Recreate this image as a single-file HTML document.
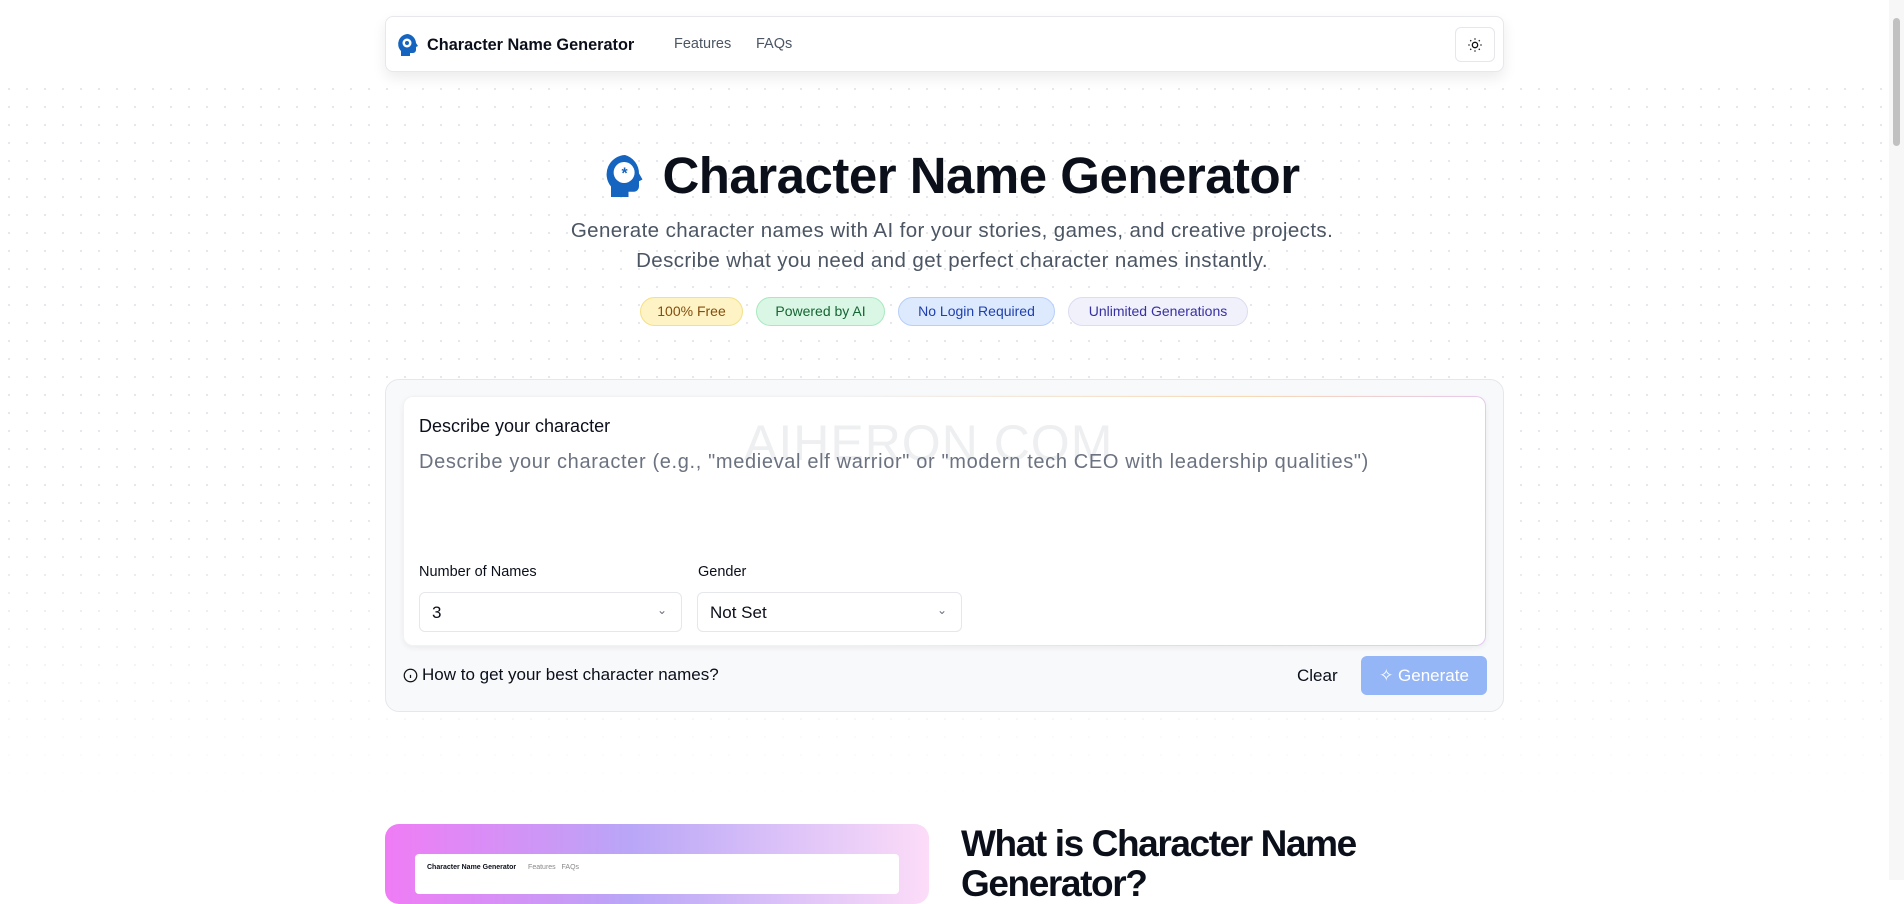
<!DOCTYPE html>
<html><head><meta charset="utf-8"><style>
*{box-sizing:border-box;margin:0;padding:0}
html,body{width:1904px;height:880px;overflow:hidden;background:#fff;font-family:"Liberation Sans",sans-serif;color:#0b0f1a}
.dots{position:absolute;left:0;top:80px;width:1889px;height:720px;background-image:radial-gradient(#e3e5ea 1px,transparent 1.2px);background-size:18px 18px;-webkit-mask-image:linear-gradient(#000 60%,transparent);}
.nav{position:absolute;left:385px;top:16px;width:1119px;height:56px;background:#fff;border:1px solid #e6e8ec;border-radius:8px;box-shadow:0 6px 14px rgba(0,0,0,.08)}
.brand{position:absolute;left:10px;top:15px;display:flex;align-items:center;gap:7px;font-weight:700;font-size:16.3px}
.nl{position:absolute;top:19px;font-size:14.5px;color:#4b5563}
.tb{position:absolute;right:8px;top:10px;width:40px;height:35px;border:1px solid #e5e7eb;border-radius:6px;display:flex;align-items:center;justify-content:center}
h1{position:absolute;left:0;width:1904px;top:146px;text-align:center;font-size:51px;font-weight:700;letter-spacing:-0.5px}
.sub{position:absolute;left:0;width:1904px;top:216px;text-align:center;font-size:20.5px;line-height:30px;color:#4b5563;letter-spacing:0.4px}
.badge{position:absolute;top:297px;height:29px;border-radius:15px;font-size:14px;line-height:27px;text-align:center;border:1px solid}
.card{position:absolute;left:385px;top:379px;width:1119px;height:333px;background:#f8f9fb;border:1px solid #e5e7eb;border-radius:14px}
.inner{position:absolute;left:403px;top:396px;width:1083px;height:250px;border-radius:10px;padding:1px;background:linear-gradient(100deg,#f2f2f4 40%,#f7d9b5 75%,#e4c6f5);box-shadow:0 2px 6px rgba(0,0,0,.06)}
.inner>div{width:100%;height:100%;background:#fff;border-radius:9px;position:relative}
.lbl{position:absolute;font-size:14.5px;font-weight:500}
.sel{position:absolute;top:195px;height:40px;border:1px solid #e5e7eb;border-radius:6px;font-size:17px;padding:10px 12px}
.sel span{position:absolute;right:14px;top:10px;color:#6b7280;font-size:12px}
</style></head><body>
<div class="dots"></div>
<div class="nav">
 <div class="brand"><svg width="24" height="26" viewBox="0 0 24 26"><path d="M12 2a10 10 0 0 0-7 17v5h9v-3h3a3 3 0 0 0 3-3v-3l2-1-2-3A10 10 0 0 0 12 2z" fill="#1565c0"/><circle cx="11" cy="11" r="4.5" fill="#fff"/><circle cx="11" cy="11" r="2" fill="#1565c0"/></svg>Character Name Generator</div>
 <div class="nl" style="left:288px">Features</div><div class="nl" style="left:370px">FAQs</div>
 <div class="tb"><svg width="16" height="16" viewBox="0 0 24 24" fill="none" stroke="#111" stroke-width="2"><circle cx="12" cy="12" r="4"/><path d="M12 2v2M12 20v2M4.9 4.9l1.4 1.4M17.7 17.7l1.4 1.4M2 12h2M20 12h2M4.9 19.1l1.4-1.4M17.7 6.3l1.4-1.4"/></svg></div>
</div>
<h1><svg width="42" height="46" viewBox="0 0 24 26" style="vertical-align:-6px;margin-right:16px"><path d="M12 1a11 11 0 0 0-8 18v6h10v-3h3a3 3 0 0 0 3-3v-3l2-1-2-3.5A11 11 0 0 0 12 1z" fill="#1565c0"/><circle cx="11.5" cy="11" r="6" fill="#fff"/><text x="11.5" y="14.5" font-size="9" text-anchor="middle" fill="#1565c0" font-family="Liberation Sans">*</text></svg>Character Name Generator</h1>
<div class="sub">Generate character names with AI for your stories, games, and creative projects.<br>Describe what you need and get perfect character names instantly.</div>
<div class="badge" style="left:640px;width:103px;background:#fdf3c4;border-color:#f5e08a;color:#854d0e">100% Free</div>
<div class="badge" style="left:756px;width:129px;background:#d9f7e4;border-color:#a9e9c0;color:#166534">Powered by AI</div>
<div class="badge" style="left:898px;width:157px;background:#dde9fd;border-color:#b7cffb;color:#1e40af">No Login Required</div>
<div class="badge" style="left:1068px;width:180px;background:#f1f1fb;border-color:#dcdcf2;color:#3730a3">Unlimited Generations</div>
<div class="card"></div>
<div class="inner"><div>
 <div class="lbl" style="left:15px;top:19px;font-size:18px">Describe your character</div>
 <div style="position:absolute;left:340px;top:17px;font-size:50px;color:#eeeff1;font-weight:300;letter-spacing:1px">AIHERON.COM</div>
 <div style="position:absolute;left:15px;top:54px;font-size:20px;color:#6b7280;letter-spacing:0.65px">Describe your character (e.g., "medieval elf warrior" or "modern tech CEO with leadership qualities")</div>
 <div class="lbl" style="left:15px;top:167px">Number of Names</div>
 <div class="lbl" style="left:294px;top:167px">Gender</div>
 <div class="sel" style="left:15px;width:263px">3<span>&#8964;</span></div>
 <div class="sel" style="left:293px;width:265px">Not Set<span>&#8964;</span></div>
</div></div>
<div style="position:absolute;left:403px;top:665px;font-size:17px;display:flex;align-items:center;gap:4px"><svg width="15" height="15" viewBox="0 0 24 24" fill="none" stroke="#111" stroke-width="2"><circle cx="12" cy="12" r="10"/><path d="M12 16v-5M12 8v0"/></svg>How to get your best character names?</div>
<div style="position:absolute;left:1297px;top:666px;font-size:17px;font-weight:500">Clear</div>
<div style="position:absolute;left:1361px;top:656px;width:126px;height:39px;border-radius:6px;background:#94b6f6;color:#fff;font-size:17px;line-height:39px;text-align:center">✧ Generate</div>
<div style="position:absolute;left:385px;top:824px;width:544px;height:80px;border-radius:14px;background:linear-gradient(90deg,#f07cf5,#b9a6f7 45%,#fcdcf8)"></div>
<div style="position:absolute;left:415px;top:854px;width:484px;height:40px;background:#fff;border-radius:4px;font-size:7px;padding:10px 12px;font-weight:700">Character Name Generator <span style="font-weight:400;color:#888;margin-left:10px">Features &nbsp; FAQs</span></div>
<div style="position:absolute;left:961px;top:824px;font-size:37px;font-weight:800;letter-spacing:-1.4px;line-height:40px">What is Character Name<br>Generator?</div>
<div style="position:absolute;right:0;top:0;width:15px;height:880px;background:#f7f7f7"></div>
<div style="position:absolute;right:4px;top:18px;width:7px;height:128px;background:#c1c1c1;border-radius:4px"></div>
</body></html>
